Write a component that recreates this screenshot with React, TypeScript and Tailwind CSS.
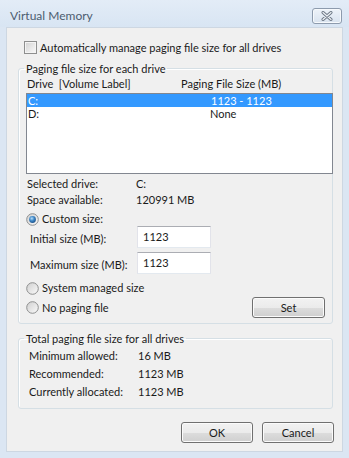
import type { ReactNode } from "react";

const btn =
  "h-[21px] rounded-[3px] border border-[#707070] bg-[linear-gradient(to_bottom,#f2f2f2_0%,#ebebeb_50%,#dddddd_50%,#cfcfcf_100%)] shadow-[inset_0_0_0_1px_#fbfbfb] leading-[18px] text-[#1a1a1a]";

function Radio({ checked = false }: { checked?: boolean }) {
  return (
    <svg width="13" height="13" viewBox="0 0 13 13" className="shrink-0">
      <defs>
        <linearGradient id={checked ? "rg-on" : "rg-off"} x1="0" y1="0" x2="1" y2="1">
          <stop offset="0" stopColor="#cfcfcf" />
          <stop offset="1" stopColor="#fbfbfb" />
        </linearGradient>
        <radialGradient id="dot" cx="0.4" cy="0.35" r="0.7">
          <stop offset="0" stopColor="#b9e0fb" />
          <stop offset="0.5" stopColor="#3d86c6" />
          <stop offset="1" stopColor="#1c4f86" />
        </radialGradient>
      </defs>
      <circle cx="6.5" cy="6.5" r="5.8" fill={`url(#${checked ? "rg-on" : "rg-off"})`} stroke="#8e8f8f" strokeWidth="1" />
      {checked && <circle cx="6.5" cy="6.5" r="3.4" fill="url(#dot)" />}
    </svg>
  );
}

function Group({ label, children, className = "" }: { label: string; children: ReactNode; className?: string }) {
  return (
    <fieldset className={`border border-[#d5dfe5] rounded-[3px] shadow-[inset_1px_1px_0_#ffffff] ${className}`}>
      <legend className="ml-[5px] px-[2px] leading-[15px] text-[#1a1a1a]">{label}</legend>
      {children}
    </fieldset>
  );
}

export default function App() {
  return (
    <div className="w-[349px] h-[458px] flex flex-col bg-[#dbe6f3] font-['Lato',sans-serif] text-[11px] leading-[15px] whitespace-nowrap text-[#1a1a1a]">
      {/* title bar */}
      <div className="h-[27px] shrink-0 flex items-start pl-[10px] pr-[7px] bg-[linear-gradient(to_bottom,#e3ecf7,#d8e5f3)]">
        <span className="mt-[7px] text-[12px] leading-[17px] text-[#4c5d70]">Virtual Memory</span>
        <div className="ml-auto mt-[8px] w-[30px] h-[16px] rounded-[3px] border border-[#8d9bad] bg-[linear-gradient(to_bottom,#eef3f9,#d9e3ef)] shadow-[inset_0_0_0_1px_#f6f9fc] flex items-center justify-center">
          <svg width="12" height="10" viewBox="0 0 12 10">
            <path d="M2 1.5 L10 8.5 M10 1.5 L2 8.5" stroke="#6b7684" strokeWidth="3" strokeLinecap="round" />
            <path d="M2 1.5 L10 8.5 M10 1.5 L2 8.5" stroke="#eef2f6" strokeWidth="1.2" strokeLinecap="round" />
          </svg>
        </div>
      </div>

      {/* dialog body */}
      <div className="ml-[6px] mr-[6px] mb-[6px] flex-1 flex flex-col bg-[#f0f0f0] border border-[#cdd7e2] pl-[11px] pr-[9px]">
        <label className="mt-[13px] flex items-center gap-[3px] pl-[6px] h-[13px]">
          <span className="w-[13px] h-[13px] border border-[#8e8f8f] bg-[linear-gradient(135deg,#d2d2d2,#fafafa)] shadow-[inset_0_0_0_1px_#f4f4f4]" />
          <span className="leading-[13px]">Automatically manage paging file size for all drives</span>
        </label>

        <Group label="Paging file size for each drive" className="mt-[7px] pb-[5px]">
          <div className="h-[16px] flex leading-[16px] pl-[8px]">
            <span className="w-[154px] whitespace-pre">Drive  [Volume Label]</span>
            <span>Paging File Size (MB)</span>
          </div>
          <div className="mt-[1px] ml-[7px] mr-[-1px] h-[81px] border border-[#828790] bg-white">
            <div className="h-[13px] flex leading-[13px] bg-[#3399ff] text-white">
              <span className="w-[184px] pl-[1px]">C:</span>
              <span>1123 - 1123</span>
            </div>
            <div className="h-[13px] flex leading-[13px]">
              <span className="w-[183px] pl-[1px]">D:</span>
              <span>None</span>
            </div>
          </div>

          <div className="mt-[2px] pl-[8px] leading-[16px]">
            <div className="flex">
              <span className="w-[109px]">Selected drive:</span>
              <span>C:</span>
            </div>
            <div className="flex">
              <span className="w-[109px]">Space available:</span>
              <span>120991 MB</span>
            </div>
          </div>

          <label className="mt-[4px] h-[14px] pl-[7px] flex items-center gap-[3px]">
            <Radio checked />
            <span className="leading-[14px]">Custom size:</span>
          </label>

          <div className="pl-[11px] flex flex-col gap-[4px]">
            {["Initial size (MB):", "Maximum size (MB):"].map((l) => (
              <div key={l} className="flex items-center h-[22px]">
                <span className="w-[107px] mt-[3px]">{l}</span>
                <div className="w-[74px] h-[22px] bg-white border border-[#e2e3ea] border-t-[#abadb3] border-b-[#e3e9ef] pl-[5px] pt-[2px] leading-[15px]">
                  1123
                </div>
              </div>
            ))}
          </div>

          <label className="mt-[7px] h-[14px] pl-[7px] flex items-center gap-[3px]">
            <Radio />
            <span className="leading-[14px]">System managed size</span>
          </label>
          <div className="mt-[2px] h-[21px] pl-[7px] pr-[7px] flex items-center gap-[3px]">
            <Radio />
            <span className="leading-[14px]">No paging file</span>
            <button className={`${btn} ml-auto w-[73px]`}>Set</button>
          </div>
        </Group>

        <Group label="Total paging file size for all drives" className="mt-[7px] pt-[1px] pb-[7px]">
          <div className="pl-[10px] leading-[18px]">
            {[
              ["Minimum allowed:", "16 MB"],
              ["Recommended:", "1123 MB"],
              ["Currently allocated:", "1123 MB"],
            ].map(([k, v]) => (
              <div key={k} className="flex">
                <span className="w-[109px]">{k}</span>
                <span>{v}</span>
              </div>
            ))}
          </div>
        </Group>

        <div className="mt-[13px] mr-[-1px] flex justify-end gap-[9px]">
          <button className={`${btn} w-[72px]`}>OK</button>
          <button className={`${btn} w-[72px]`}>Cancel</button>
        </div>
      </div>
    </div>
  );
}
